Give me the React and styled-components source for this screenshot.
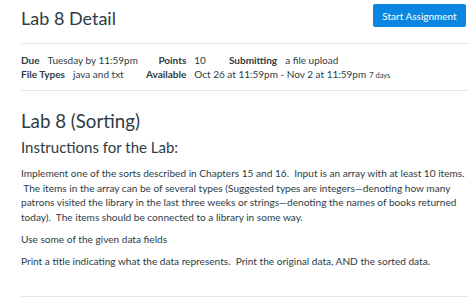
import React from "react";
import styled, { createGlobalStyle } from "styled-components";

const GlobalStyle = createGlobalStyle`
  html, body {
    margin: 0;
    padding: 0;
    background: #fff;
  }
  body {
    font-family: Lato, "Open Sans", "Liberation Sans", sans-serif;
    color: #2d3b45;
  }
`;

const Page = styled.div`
  width: 474px;
  height: 299px;
  overflow: hidden;
  padding: 0 6px 0 21px;
  box-sizing: border-box;
`;

const Header = styled.div`
  display: flex;
  justify-content: space-between;
  align-items: flex-start;
  padding-top: 4px;
  height: 39px;
  border-bottom: 1px solid #e3e6e8;
`;

const Title = styled.h1`
  margin: 2px 0 0;
  font-size: 18px;
  font-weight: 400;
  line-height: 24px;
`;

const Button = styled.button`
  width: 93px;
  height: 23px;
  margin-right: 2px;
  border: 0;
  border-radius: 2px;
  background: #0a86e2;
  color: #fff;
  font-family: inherit;
  font-size: 10px;
  font-weight: 400;
  padding: 0;
`;

const Details = styled.div`
  display: grid;
  grid-template-columns: auto auto 1fr;
  column-gap: 8px;
  row-gap: 1px;
  padding: 10px 0 8px;
  border-bottom: 1px solid #e3e6e8;
  font-size: 10px;
  line-height: 13px;
`;

const Cell = styled.div`
  white-space: nowrap;
  text-align: ${(p) => (p.$right ? "right" : "left")};
`;

const Label = styled.span`
  font-weight: 700;
  margin-right: ${(p) => (p.$gap === undefined ? 8 : p.$gap)}px;
`;

const Value = styled.span`
  margin-right: ${(p) => p.$gap || 0}px;
`;

const Small = styled.span`
  font-size: 7.5px;
  margin-left: 3px;
`;

const Heading = styled.h2`
  margin: 18px 0 0;
  font-size: 18.7px;
  font-weight: 400;
  line-height: 24px;
`;

const SubHeading = styled.h3`
  margin: 4px 0 9px;
  font-size: 15px;
  font-weight: 400;
  line-height: 20px;
`;

const Body = styled.div`
  font-size: 10.1px;
  line-height: 14.5px;
  border-bottom: 1px solid #e3e6e8;
  padding-bottom: 20px;

  p {
    margin: 0 0 7.5px;
  }
`;

export default function App() {
  return (
    <>
      <GlobalStyle />
      <Page>
        <Header>
          <Title>Lab 8 Detail</Title>
          <Button>Start Assignment</Button>
        </Header>
        <Details>
          <Cell>
            <Label>Due</Label>
            <Value>Tuesday by 11:59pm</Value>
          </Cell>
          <Cell $right>
            <Label $gap={0}>Points</Label>
          </Cell>
          <Cell>
            <Value $gap={23}>10</Value>
            <Label>Submitting</Label>
            <Value>a file upload</Value>
          </Cell>
          <Cell>
            <Label>File Types</Label>
            <Value>java and txt</Value>
          </Cell>
          <Cell $right>
            <Label $gap={0}>Available</Label>
          </Cell>
          <Cell>
            <Value>Oct 26 at 11:59pm - Nov 2 at 11:59pm</Value>
            <Small>7 days</Small>
          </Cell>
        </Details>
        <Heading>Lab 8 (Sorting)</Heading>
        <SubHeading>Instructions for the Lab:</SubHeading>
        <Body>
          <p>
            Implement one of the sorts described in Chapters 15 and 16.{"\u00a0 "}Input is an array with at least 10 items. {"\u00a0"}The items in the array can be of several types (Suggested types are integers—denoting how many patrons visited the library in the last three weeks or strings—denoting the names of books returned today).{"\u00a0 "}The items should be connected to a library in some way.
          </p>
          <p>Use some of the given data fields</p>
          <p>
            Print a title indicating what the data represents.{"\u00a0 "}Print the original data, AND the sorted data.
          </p>
        </Body>
      </Page>
    </>
  );
}
